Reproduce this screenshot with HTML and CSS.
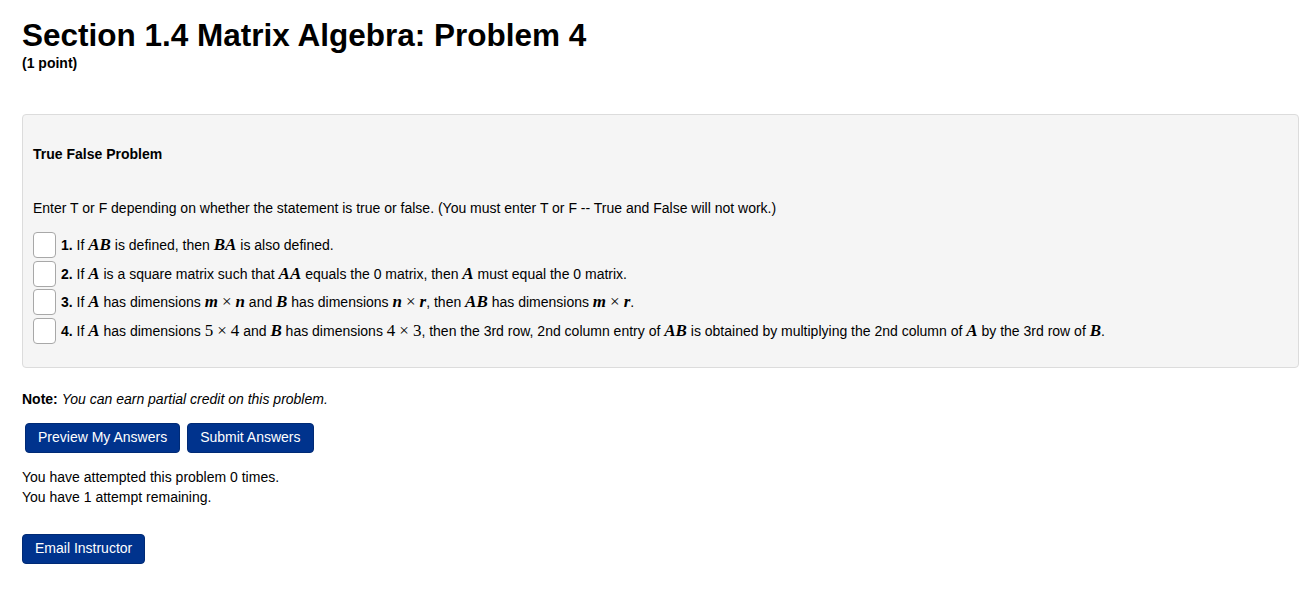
FILE: index.html
```html
<!DOCTYPE html>
<html>
<head>
<meta charset="utf-8">
<link rel="stylesheet" href="styles.css">
</head>
<body>
<div class="page">
  <h1 class="title">Section 1.4 Matrix Algebra: Problem 4</h1>
  <div class="points">(1 point)</div>

  <div class="panel">
    <p class="heading">True False Problem</p>
    <p class="intro">Enter T or F depending on whether the statement is true or false. (You must enter T or F -- True and False will not work.)</p>
    <div class="rows">
      <div class="row"><span class="box"></span><span class="stmt"><b>1.</b> If <i class="m">AB</i> is defined, then <i class="m">BA</i> is also defined.</span></div>
      <div class="row"><span class="box"></span><span class="stmt"><b>2.</b> If <i class="m">A</i> is a square matrix such that <i class="m">AA</i> equals the 0 matrix, then <i class="m">A</i> must equal the 0 matrix.</span></div>
      <div class="row"><span class="box"></span><span class="stmt"><b>3.</b> If <i class="m">A</i> has dimensions <i class="m">m</i><span class="op">×</span><i class="m">n</i> and <i class="m">B</i> has dimensions <i class="m">n</i><span class="op">×</span><i class="m">r</i>, then <i class="m">AB</i> has dimensions <i class="m">m</i><span class="op">×</span><i class="m">r</i>.</span></div>
      <div class="row"><span class="box"></span><span class="stmt"><b>4.</b> If <i class="m">A</i> has dimensions <span class="num">5</span><span class="op">×</span><span class="num">4</span> and <i class="m">B</i> has dimensions <span class="num">4</span><span class="op">×</span><span class="num">3</span>, then the 3rd row, 2nd column entry of <i class="m">AB</i> is obtained by multiplying the 2nd column of <i class="m">A</i> by the 3rd row of <i class="m">B</i>.</span></div>
    </div>
  </div>

  <p class="note"><b>Note:</b> <i>You can earn partial credit on this problem.</i></p>
  <div class="actions">
    <button class="btn">Preview My Answers</button>
    <button class="btn">Submit Answers</button>
  </div>
  <p class="attempts">You have attempted this problem 0 times.<br>You have 1 attempt remaining.</p>
  <button class="btn email">Email Instructor</button>
</div>
</body>
</html>
```
FILE: styles.css
```css
html, body {
  margin: 0;
  padding: 0;
  background: #ffffff;
}
body {
  font-family: "Liberation Sans", Arial, sans-serif;
  font-size: 14px;
  line-height: 20px;
  color: #000;
}
.page {
  padding: 16px 17px 0 22px;
}
.title {
  font-size: 31.5px;
  line-height: 38px;
  font-weight: bold;
  margin: 0;
}
.points {
  font-size: 14px;
  font-weight: bold;
  line-height: 16px;
  margin-top: 1px;
}
.panel {
  margin-top: 43px;
  background: #f5f5f5;
  border: 1px solid #dcdcdc;
  border-radius: 4px;
  padding: 0 10px 23px 10px;
}
.heading {
  font-size: 14px;
  font-weight: bold;
  margin: 29px 0 0 0;
}
.intro {
  font-size: 14px;
  margin: 34px 0 0 0;
}
.rows {
  margin-top: 14px;
  display: flex;
  flex-direction: column;
  gap: 2px;
}
.row {
  display: flex;
  align-items: center;
  height: 26.5px;
}
.box {
  width: 21px;
  height: 24px;
  border: 1px solid #a8a8a8;
  border-radius: 4px;
  background: #fff;
  flex: none;
}
.stmt {
  margin-left: 5px;
  font-size: 14px;
}
.m {
  font-family: "Liberation Serif", "Times New Roman", serif;
  font-style: italic;
  font-weight: bold;
  font-size: 17px;
}
.num {
  font-family: "Liberation Serif", "Times New Roman", serif;
  font-size: 17px;
}
.op {
  font-family: "Liberation Serif", "Times New Roman", serif;
  font-size: 17px;
  margin: 0 4px;
}
.note {
  margin: 21px 0 0 0;
  font-size: 14px;
}
.actions {
  display: flex;
  gap: 7px;
  margin: 14px 0 0 3px;
}
.btn {
  font-family: "Liberation Sans", Arial, sans-serif;
  font-size: 14px;
  line-height: 17px;
  color: #fff;
  background: #00338d;
  border: 1px solid #002a75;
  border-radius: 4px;
  padding: 5px 12px 6px 12px;
  cursor: pointer;
}
.attempts {
  margin: 14px 0 0 0;
  font-size: 14px;
}
.email {
  margin-top: 27px;
  padding: 5px 12px 6px 12px;
}
```
